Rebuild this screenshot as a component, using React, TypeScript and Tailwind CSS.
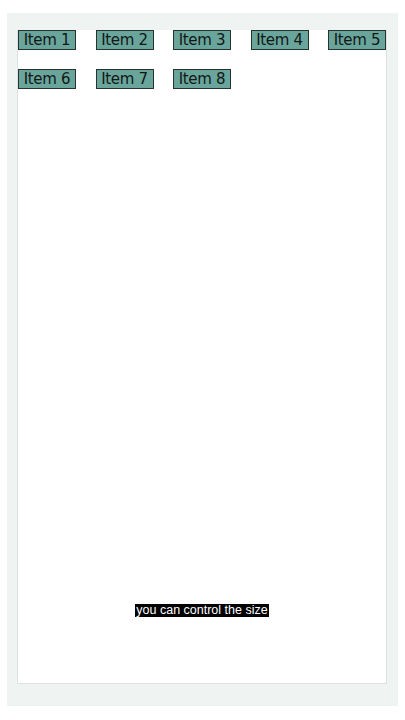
import React from 'react'

const items = ['Item 1', 'Item 2', 'Item 3', 'Item 4', 'Item 5', 'Item 6', 'Item 7', 'Item 8']

export default function App() {
  return (
    <div className="w-[405px] h-[720px] bg-white pt-[13px] pl-[7px]">
      {/* outer frame */}
      <div className="w-[391px] h-[693px] bg-[#eff3f2] pt-[17px] pl-[10px] pr-[11px] pb-[22px] flex">
        {/* sized container */}
        <div className="flex-1 bg-white border border-t-0 border-[#dde2e1] flex flex-col">
          <div className="flex flex-wrap gap-x-[19.5px] gap-y-[19px]">
            {items.map((item) => (
              <div
                key={item}
                className="w-[58px] h-[20px] bg-[#6aa59c] border border-[#26332f] flex items-center justify-center text-[15px] leading-none text-[#111816] font-['DejaVu_Sans',sans-serif] tracking-[-0.3px]"
              >
                {item}
              </div>
            ))}
          </div>
          <div className="mt-auto mb-[66px] flex justify-center">
            <span className="bg-black text-white text-[12.5px] leading-[13px] px-[1px] font-['Liberation_Sans',Arial,sans-serif]">
              you can control the size
            </span>
          </div>
        </div>
      </div>
    </div>
  )
}
